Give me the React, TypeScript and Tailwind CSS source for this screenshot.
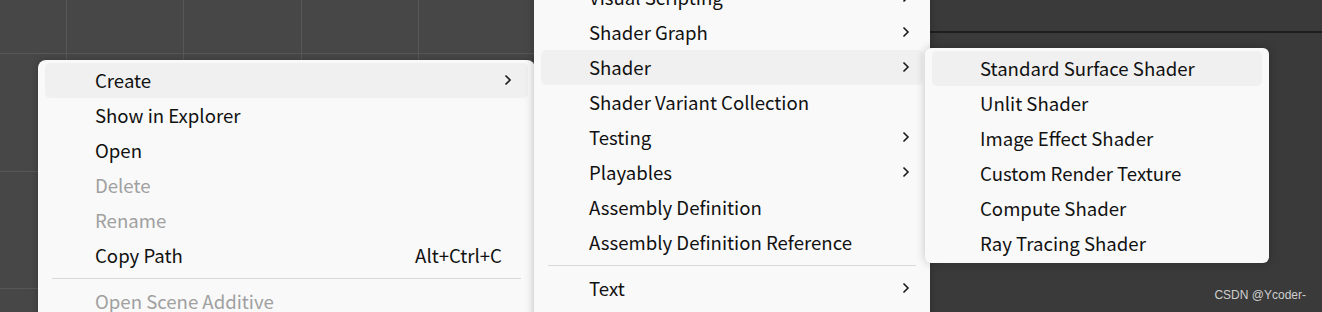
import React from "react";

type Item = { label: string; arrow?: boolean; disabled?: boolean; shortcut?: string; hl?: boolean; sep?: boolean };

const Chevron = () => (
  <svg width="8" height="12" viewBox="0 0 8 12" className="shrink-0">
    <polyline points="1.5,1.5 6,6 1.5,10.5" fill="none" stroke="#1a1a1a" strokeWidth="1.6" />
  </svg>
);

function Row({ item, textLeft, arrowRight }: { item: Item; textLeft: string; arrowRight: string }) {
  if (item.sep) {
    return (
      <div className="h-[11px] flex items-center px-[7px]">
        <div className="h-px w-full bg-[#d9d9d9]" />
      </div>
    );
  }
  return (
    <div
      className={`h-[35px] shrink-0 flex items-center pb-[2px] rounded-[5px] ${item.hl ? "bg-[#f0f0f0]" : ""} ${textLeft} ${arrowRight}`}
    >
      <span className={`flex-1 whitespace-nowrap ${item.disabled ? "text-[#a0a0a0]" : "text-[#111]"}`}>{item.label}</span>
      {item.shortcut && <span className="text-[#111] whitespace-nowrap mr-[10px]">{item.shortcut}</span>}
      {item.arrow && <Chevron />}
    </div>
  );
}

const menu1: Item[] = [
  { label: "Create", arrow: true, hl: true },
  { label: "Show in Explorer" },
  { label: "Open" },
  { label: "Delete", disabled: true },
  { label: "Rename", disabled: true },
  { label: "Copy Path", shortcut: "Alt+Ctrl+C" },
  { label: "", sep: true },
  { label: "Open Scene Additive", disabled: true },
];

const menu2: Item[] = [
  { label: "Visual Scripting", arrow: true },
  { label: "Shader Graph", arrow: true },
  { label: "Shader", arrow: true, hl: true },
  { label: "Shader Variant Collection" },
  { label: "Testing", arrow: true },
  { label: "Playables", arrow: true },
  { label: "Assembly Definition" },
  { label: "Assembly Definition Reference" },
  { label: "", sep: true },
  { label: "Text", arrow: true },
];

const menu3: Item[] = [
  { label: "Standard Surface Shader", hl: true },
  { label: "Unlit Shader" },
  { label: "Image Effect Shader" },
  { label: "Custom Render Texture" },
  { label: "Compute Shader" },
  { label: "Ray Tracing Shader" },
];

export default function App() {
  const font = { fontFamily: '"Noto Sans CJK SC", "Noto Sans", sans-serif' };
  return (
    <div className="relative w-[1322px] h-[312px] overflow-hidden bg-[#474747] text-[18.6px]" style={font}>
      {/* grid drawing */}
      <svg className="absolute inset-0" width="1322" height="312">
        {[66, 183, 301, 418].map((x) => (
          <line key={x} x1={x + 0.5} y1={0} x2={x + 0.5} y2={312} stroke="#575757" strokeWidth="1" />
        ))}
        {[53, 171, 288].map((y) => (
          <line key={y} x1={0} y1={y + 0.5} x2={930} y2={y + 0.5} stroke="#575757" strokeWidth="1" />
        ))}
      </svg>

      {/* right dark panel */}
      <div className="absolute left-[930px] top-0 right-0 bottom-0 bg-[#3a3a3a] flex flex-col">
        <div className="h-[33px] border-b-2 border-[#1e1e1e]" />
        <div className="flex-1 flex items-end justify-end pr-[16px] pb-[8px]">
          <span className="text-[12px] text-[#cfcfcf]" style={{ fontFamily: '"Liberation Sans", Arial, sans-serif' }}>
            CSDN @Ycoder-
          </span>
        </div>
      </div>

      {/* menu 1 */}
      <div className="absolute left-[38px] top-[60px] w-[497px] h-[290px] rounded-[8px] bg-[#f9f9f9] shadow-[0_0_6px_rgba(0,0,0,0.25)] pt-[3px] px-[7px] flex flex-col">
        {menu1.map((it, i) => (
          <Row key={i} item={it} textLeft="pl-[50px]" arrowRight="pr-[16px]" />
        ))}
      </div>

      {/* menu 2 */}
      <div className="absolute left-[534px] top-[-24px] w-[396px] h-[360px] rounded-[8px] bg-[#f9f9f9] shadow-[0_0_10px_rgba(0,0,0,0.25)] pt-[4px] px-[7px] flex flex-col">
        {menu2.map((it, i) => (
          <Row key={i} item={it} textLeft="pl-[48px]" arrowRight="pr-[13px]" />
        ))}
      </div>

      {/* menu 3 */}
      <div className="absolute left-[925px] top-[48px] w-[344px] h-[215px] rounded-[6px] bg-[#f9f9f9] shadow-[0_0_10px_rgba(0,0,0,0.22)] pt-[3px] px-[7px] flex flex-col">
        {menu3.map((it, i) => (
          <Row key={i} item={it} textLeft="pl-[48px]" arrowRight="pr-[13px]" />
        ))}
      </div>
    </div>
  );
}
